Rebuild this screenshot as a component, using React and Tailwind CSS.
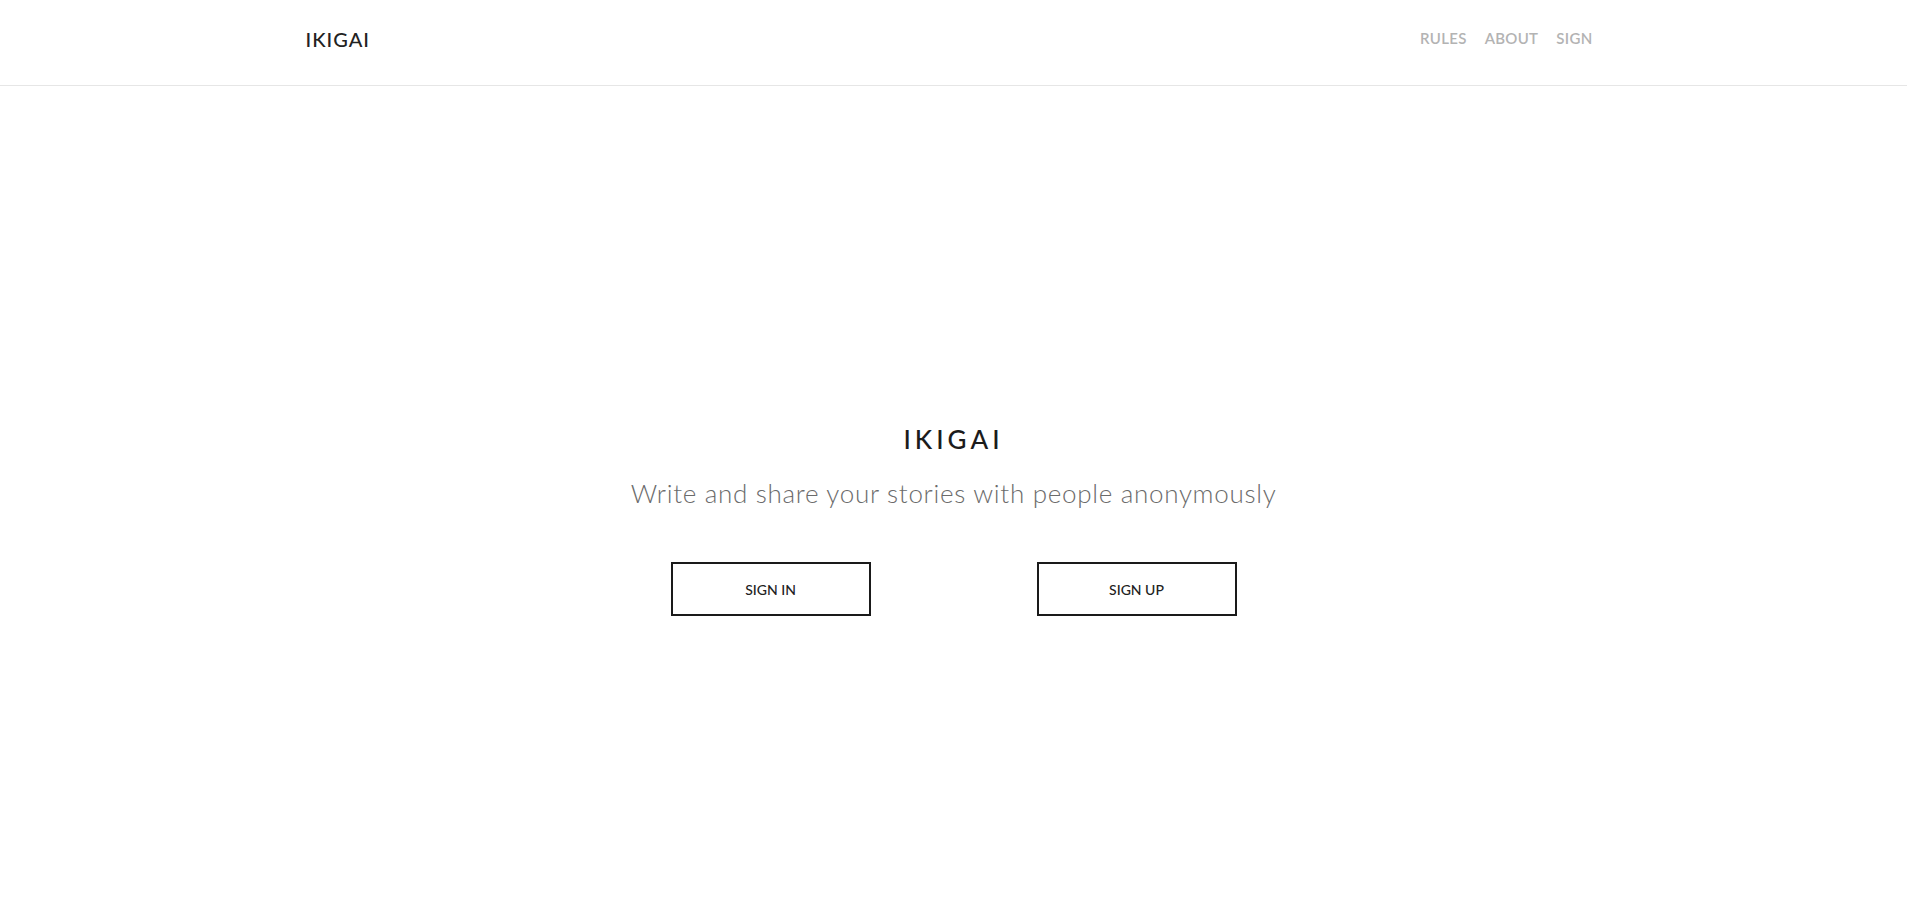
export default function App() {
  return (
    <div className="min-h-screen bg-white" style={{ fontFamily: "Lato, 'Open Sans', sans-serif" }}>
      <header className="h-[86px] border-b border-[#e6e6e6]">
        <div className="mx-auto flex h-full w-[1320px] items-center justify-between px-[12px] pb-[8px]">
          <a href="#" className="text-[20px] font-medium tracking-[1px] text-[#222]">
            IKIGAI
          </a>
          <nav className="flex items-center">
            {["RULES", "ABOUT", "SIGN"].map((item) => (
              <a
                key={item}
                href="#"
                className="px-[9px] text-[15px] font-semibold tracking-[0.3px] text-[#b3b3b3]"
              >
                {item}
              </a>
            ))}
          </nav>
        </div>
      </header>

      <main className="flex flex-col items-center pt-[340px]">
        <h1 className="text-[26px] font-medium leading-none tracking-[4px] text-[#1c1c1c]">IKIGAI</h1>
        <p className="mt-[28px] text-[26px] font-light leading-none tracking-[0.7px] text-[#6b6b6b]">
          Write and share your stories with people anonymously
        </p>
        <div className="mt-[56px] flex gap-[166px]">
          <button className="h-[54px] w-[200px] border-2 border-[#1a1a1a] text-[14px] font-medium text-[#222]">
            SIGN IN
          </button>
          <button className="h-[54px] w-[200px] border-2 border-[#1a1a1a] text-[14px] font-medium text-[#222]">
            SIGN UP
          </button>
        </div>
      </main>
    </div>
  );
}
